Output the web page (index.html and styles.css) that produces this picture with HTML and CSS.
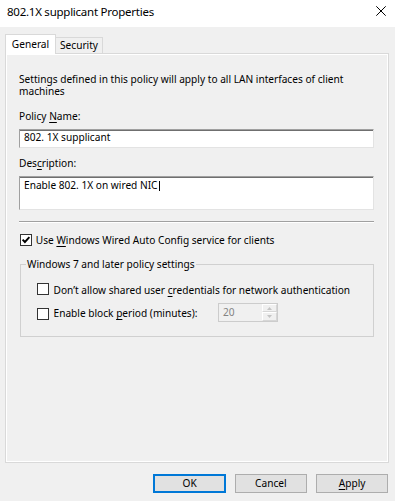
FILE: index.html
```html
<!DOCTYPE html>
<html lang="en">
<head>
<meta charset="utf-8">
<title>802.1X supplicant Properties</title>
<link rel="stylesheet" href="styles.css">
</head>
<body>
<div class="dialog">
  <div class="titlebar">
    <span class="title">802.1X supplicant Properties</span>
    <svg class="close" width="10" height="10" viewBox="0 0 10 10"><path d="M0.3 0.3L9.7 9.7M9.7 0.3L0.3 9.7" stroke="#000" stroke-width="1" fill="none"/></svg>
  </div>
  <div class="tabs">
    <div class="tab tab-active">General</div>
    <div class="tab tab-inactive">Security</div>
  </div>
  <div class="panel">
    <p class="intro">Settings defined in this policy will apply to all LAN interfaces of client machines</p>
    <div class="label label-name">Policy <u>N</u>ame:</div>
    <div class="textbox textbox-name">802. 1X supplicant</div>
    <div class="label label-desc">Des<u>c</u>ription:</div>
    <div class="textbox textbox-desc">Enable 802. 1X on wired NIC<span class="caret"></span></div>
    <div class="separator"></div>
    <div class="check-row check-main">
      <span class="checkbox"><svg width="10" height="10" viewBox="0 0 10 10"><path d="M1.6 4.6L3.9 7L8.4 2.2" stroke="#000" stroke-width="1.9" fill="none"/></svg></span>
      <span class="lbl">Use <u>W</u>indows Wired Auto Config service for clients</span>
    </div>
    <fieldset class="group">
      <legend>Windows 7 and later policy settings</legend>
      <div class="check-row row-shared">
        <span class="checkbox"></span>
        <span class="lbl">Don’t allow shared user <u>c</u>redentials for network authentication</span>
      </div>
      <div class="check-row row-block">
        <span class="checkbox"></span>
        <span class="lbl lbl-block">Enable block <u>p</u>eriod (minutes):</span>
        <div class="spinner">
          <span class="spin-value">20</span>
          <span class="spin-btns">
            <span class="spin-btn"><svg width="5" height="3" viewBox="0 0 5 3"><path d="M2.5 0L5 3H0Z" fill="#c4c4c4"/></svg></span>
            <span class="spin-btn"><svg width="5" height="3" viewBox="0 0 5 3"><path d="M0 0H5L2.5 3Z" fill="#c4c4c4"/></svg></span>
          </span>
        </div>
      </div>
    </fieldset>
  </div>
  <div class="buttons">
    <div class="btn btn-default">OK</div>
    <div class="btn">Cancel</div>
    <div class="btn"><u>A</u>pply</div>
  </div>
</div>
</body>
</html>
```
FILE: styles.css
```css
html, body {
  margin: 0;
  padding: 0;
}
body {
  width: 395px;
  height: 501px;
  overflow: hidden;
  background: #f0f0f0;
  color: #000;
  font-family: "Noto Sans", "Liberation Sans", sans-serif;
  font-size: 10.15px;
  line-height: 12.5px;
}
u {
  text-decoration-thickness: 1px;
  text-underline-offset: 1.5px;
}
.dialog {
  width: 395px;
  height: 501px;
}
.titlebar {
  height: 27px;
  background: #fff;
  display: flex;
  justify-content: space-between;
  align-items: flex-start;
  padding: 0 9px 0 7px;
  box-sizing: border-box;
}
.title {
  font-size: 11.5px;
  letter-spacing: -0.25px;
  line-height: 24.5px;
}
.close {
  margin-top: 6px;
}
.tabs {
  display: flex;
  align-items: flex-end;
  margin: 7px 0 0 5px;
}
.tab {
  box-sizing: border-box;
  border: 1px solid #d9d9d9;
  border-bottom: none;
  text-align: center;
}
.tab-active {
  width: 51px;
  height: 20px;
  margin-bottom: -1px;
  padding-top: 2.5px;
  background: #fff;
  position: relative;
  z-index: 1;
}
.tab-inactive {
  width: 47px;
  height: 16px;
  border-left: none;
  padding-top: 0.6px;
  background: #f0f0f0;
}
.panel {
  box-sizing: border-box;
  margin-left: 5px;
  width: 384px;
  height: 410px;
  border: 1px solid #d9d9d9;
  box-shadow: inset 1px 1px 0 #fff, inset -1px -1px 0 #fff;
  padding: 0 14px 0 13px;
}
.intro {
  margin: 18.8px 0 0;
}
.label-name {
  margin-top: 12px;
}
.label-desc {
  margin-top: 9.1px;
}
.textbox {
  box-sizing: border-box;
  background: #fff;
  border: 1px solid #e3e3e3;
  border-top-color: #a0a0a0;
  border-left-color: #a0a0a0;
  box-shadow: inset 0 1px 0 #6f6f6f;
  padding-left: 4px;
  white-space: nowrap;
}
.textbox-name {
  margin-top: 6.7px;
  height: 19px;
  padding-top: 0.8px;
}
.textbox-desc {
  margin-top: 6.4px;
  height: 34px;
  padding-top: 2.1px;
}
.caret {
  display: inline-block;
  width: 1px;
  height: 10px;
  margin-left: 1px;
  background: #000;
  vertical-align: -1.8px;
}
.separator {
  margin-top: 11px;
  height: 0;
  border-top: 1px solid #a0a0a0;
  border-bottom: 1px solid #fff;
}
.check-row {
  display: flex;
  align-items: flex-start;
  white-space: nowrap;
}
.checkbox {
  box-sizing: border-box;
  width: 12px;
  height: 12px;
  flex: none;
  border: 1px solid #333;
  background: #fff;
  display: flex;
  align-items: center;
  justify-content: center;
  margin-right: 4.5px;
}
.check-main {
  margin-top: 11px;
  margin-left: 1px;
}
.check-main .checkbox {
  margin-right: 3.8px;
}
.group {
  box-sizing: border-box;
  margin: 11.6px 0 0 1px;
  width: 354px;
  min-width: 0;
  border: 1px solid #d0d0d0;
  padding: 0 16px 14px 16px;
}
.group legend {
  margin-left: -11px;
  padding: 0 1px;
  line-height: 12.5px;
}
.row-shared {
  margin-top: 12.4px;
}
.row-shared .lbl {
  margin-top: 1.1px;
}
.row-block {
  margin-top: 6.4px;
  height: 19px;
}
.row-block .checkbox {
  margin-top: 5px;
}
.lbl-block {
  width: 164.5px;
  margin-top: 4.5px;
}
.spinner {
  box-sizing: border-box;
  width: 60px;
  height: 19px;
  border: 1px solid #cccccc;
  background: #f0f0f0;
  display: flex;
}
.spin-value {
  flex: 1;
  color: #838383;
  padding-left: 4px;
  padding-top: 2.2px;
}
.spin-btns {
  width: 15px;
  margin: 0 0 0 0;
  display: flex;
  flex-direction: column;
}
.spin-btn {
  flex: 1;
  box-sizing: border-box;
  border: 1px solid #d6d6d6;
  border-top-color: #fff;
  border-left-color: #fff;
  display: flex;
  align-items: center;
  justify-content: center;
}
.buttons {
  display: flex;
  justify-content: flex-end;
  gap: 8.7px;
  padding-right: 6.7px;
  margin-top: 11px;
}
.btn {
  box-sizing: border-box;
  width: 72.5px;
  height: 19px;
  background: #e1e1e1;
  border: 1px solid #adadad;
  text-align: center;
  line-height: 17px;
}
.btn-default {
  border: 2px solid #0078d7;
  line-height: 15px;
}
```
